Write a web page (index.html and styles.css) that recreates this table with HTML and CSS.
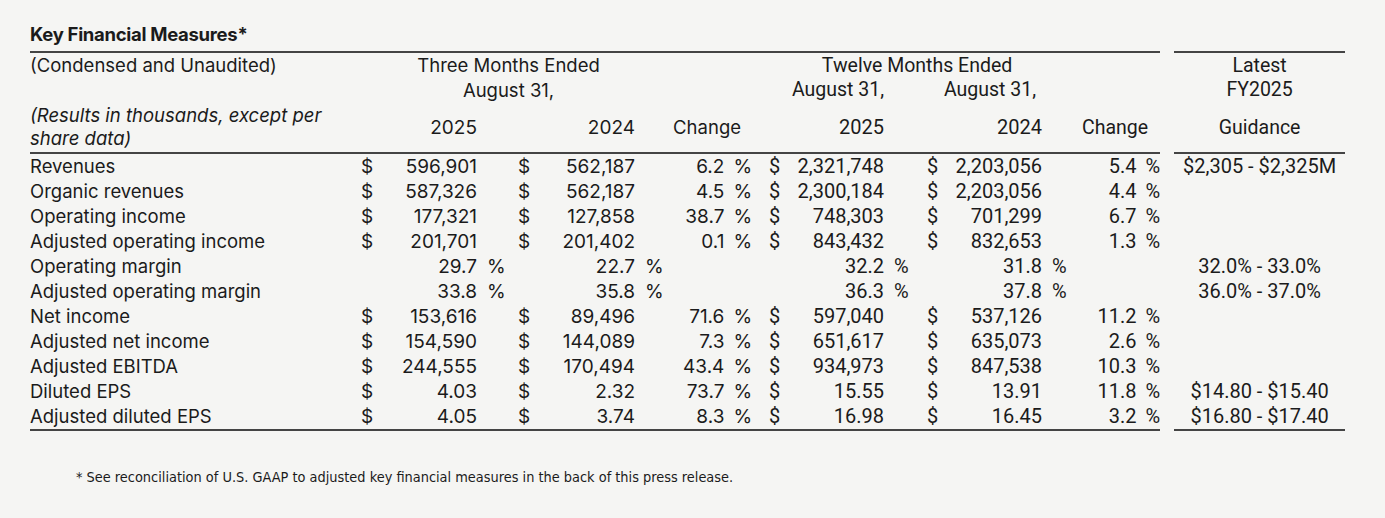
FILE: index.html
```html
<!DOCTYPE html>
<html lang="en">
<head>
<meta charset="utf-8">
<title>Key Financial Measures</title>
<link rel="stylesheet" href="styles.css">
</head>
<body>
<div class="page">
  <h1 class="title">Key Financial Measures*</h1>
  <table class="kfm">
    <colgroup>
      <col class="c-label"><col class="c-d1"><col class="c-v1"><col class="c-s1">
      <col class="c-d2"><col class="c-v2"><col class="c-s2"><col class="c-ch1">
      <col class="c-d3"><col class="c-v3"><col class="c-s3">
      <col class="c-d4"><col class="c-v4"><col class="c-s4"><col class="c-ch2">
      <col class="c-gap"><col class="c-guid">
    </colgroup>
    <thead>
      <tr class="h1">
        <td class="lbl">(Condensed and Unaudited)</td>
        <td colspan="6" class="ctr">Three Months Ended</td>
        <td></td>
        <td colspan="6" class="ctr din hd twelve">Twelve Months Ended</td>
        <td></td>
        <td class="gap"></td>
        <td class="ctr din hd">Latest</td>
      </tr>
      <tr class="h2">
        <td></td>
        <td colspan="6" class="ctr">August 31,</td>
        <td></td>
        <td></td>
        <td class="num din hd">August 31,</td>
        <td></td>
        <td colspan="2" class="num din hd aug2">August 31,</td>
        <td></td>
        <td></td>
        <td class="gap"></td>
        <td class="ctr din hd">FY2025</td>
      </tr>
      <tr class="h3">
        <td class="lbl note">(Results in thousands, except per share data)</td>
        <td></td>
        <td class="num">2025</td>
        <td></td>
        <td></td>
        <td class="num">2024</td>
        <td></td>
        <td class="ctr">Change</td>
        <td></td>
        <td class="num din">2025</td>
        <td></td>
        <td></td>
        <td class="num din">2024</td>
        <td></td>
        <td class="ctr din hd">Change</td>
        <td class="gap"></td>
        <td class="ctr din hd">Guidance</td>
      </tr>
    </thead>
    <tbody>
      <tr>
        <td class="lbl">Revenues</td>
        <td class="cur">$</td><td class="num">596,901</td><td></td>
        <td class="cur">$</td><td class="num">562,187</td><td></td>
        <td class="num chg">6.2<span class="pc">%</span></td>
        <td class="cur din c3">$</td><td class="num din">2,321,748</td><td></td>
        <td class="cur din">$</td><td class="num din">2,203,056</td><td></td>
        <td class="num din chg">5.4<span class="pc">%</span></td>
        <td class="gap"></td>
        <td class="ctr din">$2,305 - $2,325M</td>
      </tr>
      <tr>
        <td class="lbl">Organic revenues</td>
        <td class="cur">$</td><td class="num">587,326</td><td></td>
        <td class="cur">$</td><td class="num">562,187</td><td></td>
        <td class="num chg">4.5<span class="pc">%</span></td>
        <td class="cur din c3">$</td><td class="num din">2,300,184</td><td></td>
        <td class="cur din">$</td><td class="num din">2,203,056</td><td></td>
        <td class="num din chg">4.4<span class="pc">%</span></td>
        <td class="gap"></td>
        <td class="ctr din"></td>
      </tr>
      <tr>
        <td class="lbl">Operating income</td>
        <td class="cur">$</td><td class="num">177,321</td><td></td>
        <td class="cur">$</td><td class="num">127,858</td><td></td>
        <td class="num chg">38.7<span class="pc">%</span></td>
        <td class="cur din c3">$</td><td class="num din">748,303</td><td></td>
        <td class="cur din">$</td><td class="num din">701,299</td><td></td>
        <td class="num din chg">6.7<span class="pc">%</span></td>
        <td class="gap"></td>
        <td class="ctr din"></td>
      </tr>
      <tr>
        <td class="lbl">Adjusted operating income</td>
        <td class="cur">$</td><td class="num">201,701</td><td></td>
        <td class="cur">$</td><td class="num">201,402</td><td></td>
        <td class="num chg">0.1<span class="pc">%</span></td>
        <td class="cur din c3">$</td><td class="num din">843,432</td><td></td>
        <td class="cur din">$</td><td class="num din">832,653</td><td></td>
        <td class="num din chg">1.3<span class="pc">%</span></td>
        <td class="gap"></td>
        <td class="ctr din"></td>
      </tr>
      <tr>
        <td class="lbl">Operating margin</td>
        <td></td><td class="num">29.7</td><td class="pct">%</td>
        <td></td><td class="num">22.7</td><td class="pct">%</td>
        <td></td>
        <td></td><td class="num din">32.2</td><td class="pct din">%</td>
        <td></td><td class="num din">31.8</td><td class="pct din">%</td>
        <td></td>
        <td class="gap"></td>
        <td class="ctr din">32.0% - 33.0%</td>
      </tr>
      <tr>
        <td class="lbl">Adjusted operating margin</td>
        <td></td><td class="num">33.8</td><td class="pct">%</td>
        <td></td><td class="num">35.8</td><td class="pct">%</td>
        <td></td>
        <td></td><td class="num din">36.3</td><td class="pct din">%</td>
        <td></td><td class="num din">37.8</td><td class="pct din">%</td>
        <td></td>
        <td class="gap"></td>
        <td class="ctr din">36.0% - 37.0%</td>
      </tr>
      <tr>
        <td class="lbl">Net income</td>
        <td class="cur">$</td><td class="num">153,616</td><td></td>
        <td class="cur">$</td><td class="num">89,496</td><td></td>
        <td class="num chg">71.6<span class="pc">%</span></td>
        <td class="cur din c3">$</td><td class="num din">597,040</td><td></td>
        <td class="cur din">$</td><td class="num din">537,126</td><td></td>
        <td class="num din chg">11.2<span class="pc">%</span></td>
        <td class="gap"></td>
        <td class="ctr din"></td>
      </tr>
      <tr>
        <td class="lbl">Adjusted net income</td>
        <td class="cur">$</td><td class="num">154,590</td><td></td>
        <td class="cur">$</td><td class="num">144,089</td><td></td>
        <td class="num chg">7.3<span class="pc">%</span></td>
        <td class="cur din c3">$</td><td class="num din">651,617</td><td></td>
        <td class="cur din">$</td><td class="num din">635,073</td><td></td>
        <td class="num din chg">2.6<span class="pc">%</span></td>
        <td class="gap"></td>
        <td class="ctr din"></td>
      </tr>
      <tr>
        <td class="lbl">Adjusted EBITDA</td>
        <td class="cur">$</td><td class="num">244,555</td><td></td>
        <td class="cur">$</td><td class="num">170,494</td><td></td>
        <td class="num chg">43.4<span class="pc">%</span></td>
        <td class="cur din c3">$</td><td class="num din">934,973</td><td></td>
        <td class="cur din">$</td><td class="num din">847,538</td><td></td>
        <td class="num din chg">10.3<span class="pc">%</span></td>
        <td class="gap"></td>
        <td class="ctr din"></td>
      </tr>
      <tr>
        <td class="lbl">Diluted EPS</td>
        <td class="cur">$</td><td class="num">4.03</td><td></td>
        <td class="cur">$</td><td class="num">2.32</td><td></td>
        <td class="num chg">73.7<span class="pc">%</span></td>
        <td class="cur din c3">$</td><td class="num din">15.55</td><td></td>
        <td class="cur din">$</td><td class="num din">13.91</td><td></td>
        <td class="num din chg">11.8<span class="pc">%</span></td>
        <td class="gap"></td>
        <td class="ctr din">$14.80 - $15.40</td>
      </tr>
      <tr>
        <td class="lbl">Adjusted diluted EPS</td>
        <td class="cur">$</td><td class="num">4.05</td><td></td>
        <td class="cur">$</td><td class="num">3.74</td><td></td>
        <td class="num chg">8.3<span class="pc">%</span></td>
        <td class="cur din c3">$</td><td class="num din">16.98</td><td></td>
        <td class="cur din">$</td><td class="num din">16.45</td><td></td>
        <td class="num din chg">3.2<span class="pc">%</span></td>
        <td class="gap"></td>
        <td class="ctr din">$16.80 - $17.40</td>
      </tr>
    </tbody>
  </table>
  <p class="footnote">* See reconciliation of U.S. GAAP to adjusted key financial measures in the back of this press release.</p>
</div>
</body>
</html>
```

FILE: styles.css
```css
html, body {
  margin: 0;
  padding: 0;
  background: #f5f5f3;
}

body {
  color: #1b1b1b;
  font-family: Inter, "Noto Sans", "Liberation Sans", sans-serif;
  font-size: 18.5px;
}

.page {
  padding: 22px 0 0 30px;
}

.title {
  margin: 0 0 4px 0;
  font-size: 18.5px;
  font-weight: 700;
  line-height: 25px;
  letter-spacing: -0.3px;
}

.kfm {
  border-collapse: separate;
  border-spacing: 0;
  table-layout: fixed;
  width: 1315px;
  font-size: 18.5px;
}

.kfm td {
  padding: 0;
  line-height: 25px;
  white-space: nowrap;
  vertical-align: middle;
}

.c-label { width: 325px; }
.c-d1 { width: 30px; }
.c-v1 { width: 92px; }
.c-s1 { width: 35px; }
.c-d2 { width: 33px; }
.c-v2 { width: 90px; }
.c-s2 { width: 27px; }
.c-ch1 { width: 90px; }
.c-d3 { width: 38px; }
.c-v3 { width: 94px; }
.c-s3 { width: 37px; }
.c-d4 { width: 29px; }
.c-v4 { width: 92px; }
.c-s4 { width: 28px; }
.c-ch2 { width: 90px; }
.c-gap { width: 14px; }
.c-guid { width: 171px; }

.kfm tr.h1 td {
  border-top: 2px solid #444;
}

.kfm tr.h2 td {
  line-height: 24px;
}

.kfm tr.h3 td {
  border-bottom: 2px solid #444;
  height: 50px;
}

.kfm tbody tr:last-child td {
  border-bottom: 2px solid #444;
}

.kfm td.gap {
  border-color: transparent !important;
}

.lbl {
  text-align: left;
}

.note {
  font-style: italic;
  white-space: normal !important;
  line-height: 23px !important;
}

.num {
  text-align: right;
  font-size: 19px;
}

.ctr {
  text-align: center;
}

.cur {
  text-align: left;
  padding-left: 6px !important;
  font-size: 19px;
}

.cur.c3 {
  padding-left: 17px !important;
}

.pct {
  text-align: left;
  padding-left: 10px !important;
  font-size: 19px;
}

.chg .pc {
  margin-left: 9px;
}

.din {
  font-family: Roboto, "DejaVu Sans", sans-serif;
  font-size: 20px;
}

.din.hd {
  font-size: 19.5px;
}

.twelve {
  padding-left: 12px !important;
}

.aug2 {
  padding-right: 6px !important;
}

.footnote {
  margin: 36px 0 0 46px;
  font-family: "Liberation Sans Narrow", "DejaVu Sans Condensed", Roboto, sans-serif;
  font-stretch: condensed;
  font-size: 14.4px;
  line-height: 20px;
}
```
